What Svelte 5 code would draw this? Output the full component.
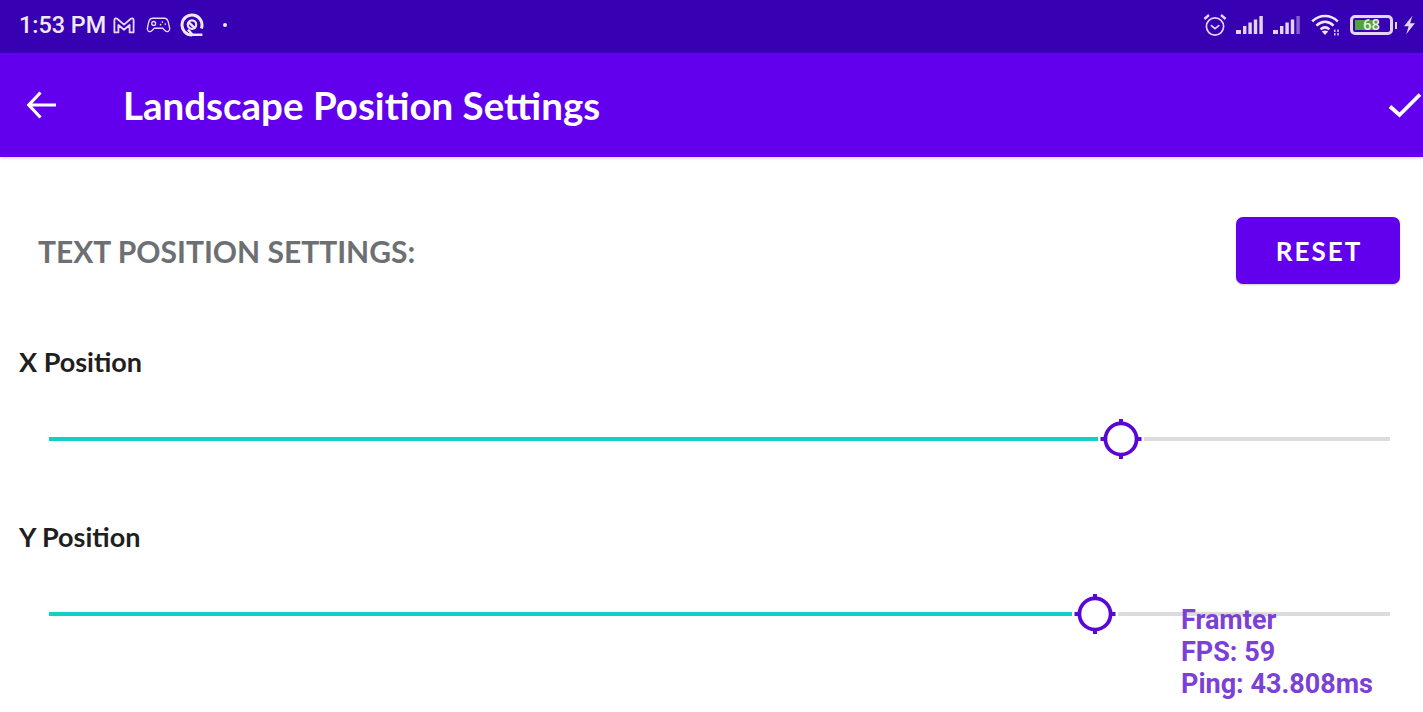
<script>
    const sliders = [
        { label: "X Position", value: 1121 - 49 },
        { label: "Y Position", value: 1095 - 49 }
    ];
    const trackWidth = 1341;
</script>

<div class="screen">
    <div class="statusbar">
        <div class="status-left">
            <span class="time">1:53 PM</span>
            <svg class="ic-gmail" width="22" height="17" viewBox="0 0 22 17" fill="none" stroke="#e6d8fb" stroke-width="1.8">
                <path d="M1.4 15.4V3C1.4 1.4 3 0.8 4.2 1.8L11 7.6L17.8 1.8C19 0.8 20.6 1.4 20.6 3V15.4H16.6V8L11 12.8L5.4 8V15.4Z" stroke-linejoin="round"/>
            </svg>
            <svg class="ic-pad" width="25" height="18" viewBox="0 0 26 18" fill="none" stroke="#e6d8fb" stroke-width="1.4">
                <path d="M7 2H19C21.5 2 22.6 3.6 23.2 6L24.6 12.5C25 15.5 22 17 20 15L17.4 12.4H8.6L6 15C4 17 1 15.5 1.4 12.5L2.8 6C3.4 3.6 4.5 2 7 2Z" stroke-linejoin="round"/>
                <circle cx="8" cy="7.4" r="2"/>
                <circle cx="17" cy="6" r="0.9" fill="#e6d8fb" stroke="none"/>
                <circle cx="20" cy="8" r="0.9" fill="#e6d8fb" stroke="none"/>
                <circle cx="15.2" cy="8.6" r="0.9" fill="#e6d8fb" stroke="none"/>
            </svg>
            <svg class="ic-q" width="24" height="24" viewBox="0 0 24 24" fill="none" stroke="#efe6fd" stroke-width="3">
                <path d="M12 22A10 10 0 1 1 21.4 15.4"/>
                <circle cx="12" cy="11.6" r="4.2" stroke-width="2.2"/>
                <path d="M8.8 9.4L15.4 15.6" stroke-width="2.4"/>
                <path d="M8 16.6L12.6 21.8H22.4" stroke-width="2.4"/>
            </svg>
            <span class="dot"></span>
        </div>
        <div class="status-right">
            <svg class="alarm" width="24" height="24" viewBox="0 0 24 24" fill="none" stroke="#e4d4fa" stroke-width="1.7">
                <circle cx="12" cy="13.5" r="8.6"/>
                <path d="M8.4 12.6L12 15.6L15.8 12.6" stroke-linecap="round"/>
                <path d="M1.4 6L6 2M22.6 6L18 2" stroke-width="2.4"/>
            </svg>
            {#each [0.999, 0.45] as lastBar}
                <svg class="signal" width="29" height="20" viewBox="0 0 29 20" fill="#e4d4fa">
                    <rect x="1" y="15" width="5" height="4"/>
                    <rect x="8" y="11" width="3.4" height="8"/>
                    <rect x="13.4" y="7.5" width="3.4" height="11.5"/>
                    <rect x="18.8" y="4.5" width="3.4" height="14.5"/>
                    <rect x="24.4" y="1" width="3.4" height="18" opacity={lastBar}/>
                </svg>
            {/each}
            <svg class="wifi" width="30" height="24" viewBox="0 0 30 24" fill="none" stroke="#efe6fd" stroke-width="2.5">
                <path d="M1.2 8.4C8.6 1.2 19.4 1.2 26.8 8.4"/>
                <path d="M5.4 12.6C10.8 7.6 17.2 7.6 22.6 12.6"/>
                <path d="M9.6 16.4C12.6 13.6 15.4 13.6 18.4 16.4"/>
                <path d="M14 22L10.8 18.6C12.8 17.2 15.2 17.2 17.2 18.6Z" fill="#efe6fd" stroke="none"/>
                <path d="M23.8 16.5V23M27 16.5V23" stroke-width="1.3" stroke-dasharray="2.6 0.8"/>
            </svg>
            <div class="battery">
                <div class="battery-body">
                    <span class="battery-fill"></span>
                    <span class="battery-text">68</span>
                </div>
                <span class="battery-cap"></span>
            </div>
            <svg class="bolt" width="13" height="20" viewBox="0 0 12 18" fill="#e4d4fa">
                <path d="M8.6 0.5L1 10.2H5.2L3 17.5L11 7.4H6.6Z"/>
            </svg>
        </div>
    </div>

    <header class="appbar">
        <svg class="back" width="34" height="34" viewBox="0 0 34 34" fill="none" stroke="#fff" stroke-width="3.2">
            <path d="M31 17H4M15.5 4.5L3.8 17L15.5 29.5"/>
        </svg>
        <h1>Landscape Position Settings</h1>
        <svg class="check" width="34" height="26" viewBox="0 0 34 26" fill="none" stroke="#fff" stroke-width="3.8">
            <path d="M2 14.5L11.5 23L32 2.5"/>
        </svg>
    </header>

    <section class="section-head">
        <h2>TEXT POSITION SETTINGS:</h2>
        <button class="reset">RESET</button>
    </section>

    {#each sliders as s}
        <div class="setting">
            <div class="setting-label">{s.label}</div>
            <div class="slider">
                <div class="track">
                    <div class="fill" style="width: {s.value / trackWidth * 100}%"></div>
                    <svg class="thumb" style="left: {s.value / trackWidth * 100}%" width="46" height="42" viewBox="0 0 46 42" fill="#fff" stroke="#5a07d6">
                        <rect x="0" y="18" width="46" height="6" fill="#fff" stroke="none"/>
                        <path d="M23 1V7M23 35V41M2.5 21H8M38 21H43.5" stroke-width="4"/>
                        <circle cx="23" cy="21" r="15.6" stroke-width="3.8"/>
                    </svg>
                </div>
            </div>
        </div>
    {/each}

    <div class="overlay">
        <div>Framter</div>
        <div>FPS: 59</div>
        <div>Ping: 43.808ms</div>
    </div>
</div>

<style>
    :global(body) {
        margin: 0;
        background: #fff;
    }
    .screen {
        position: relative;
        width: 1423px;
        height: 712px;
        overflow: hidden;
        font-family: Lato, sans-serif;
    }
    .statusbar {
        height: 53px;
        background: #3700b3;
        display: flex;
        align-items: center;
        justify-content: space-between;
        box-sizing: border-box;
        padding: 0 7px 3px 19px;
    }
    .status-left, .status-right {
        display: flex;
        align-items: center;
    }
    .time {
        font: 500 23.4px Roboto, sans-serif;
        color: #f0e8fd;
        margin-right: 7px;
    }
    .ic-pad {
        margin-left: 11px;
    }
    .ic-q {
        margin-left: 9px;
    }
    .dot {
        width: 4px;
        height: 4px;
        border-radius: 50%;
        background: #f0e8fd;
        margin-left: 19px;
    }
    .signal {
        margin-left: 8px;
    }
    .wifi {
        margin-left: 10px;
    }
    .battery {
        display: flex;
        align-items: center;
        margin-left: 9px;
    }
    .battery-body {
        position: relative;
        width: 37px;
        height: 14px;
        border: 3px solid #e4d4fa;
        border-radius: 5px;
        display: flex;
        align-items: center;
        justify-content: center;
    }
    .battery-fill {
        position: absolute;
        left: 2px;
        top: 2px;
        bottom: 2px;
        width: 22px;
        background: #4fa53c;
    }
    .battery-text {
        position: relative;
        font: 500 15px Roboto, sans-serif;
        color: #e6f3d9;
        line-height: 14px;
    }
    .battery-cap {
        width: 2px;
        height: 7px;
        margin-left: 2px;
        background: #e4d4fa;
    }
    .bolt {
        margin-left: 6px;
    }
    .appbar {
        height: 104px;
        background: #6200ee;
        display: flex;
        align-items: center;
        box-shadow: 0 1px 3px rgba(98, 0, 238, 0.25);
        padding-left: 25px;
        box-sizing: border-box;
    }
    .back {
        width: 34px;
        height: 34px;
    }
    h1 {
        flex: 1;
        margin: 0 0 0 64px;
        font-size: 38.5px;
        font-weight: 700;
        color: #fff;
    }
    .check {
        margin-right: 1px;
        margin-bottom: 0;
    }
    .section-head {
        display: flex;
        align-items: center;
        justify-content: space-between;
        padding: 60px 23px 0 38px;
    }
    h2 {
        margin: 0;
        font-size: 30px;
        font-weight: 700;
        color: #6c7073;
    }
    .reset {
        width: 164px;
        height: 67px;
        border: none;
        border-radius: 7px;
        padding: 0 0 0 2px;
        background: #6200ee;
        color: #fff;
        font-family: Lato, sans-serif;
        font-size: 26px;
        font-weight: 700;
        letter-spacing: 2px;
        box-shadow: 0 1px 2px rgba(0, 0, 0, 0.2);
    }
    .setting {
        padding: 0 33px 0 19px;
        height: 175px;
    }
    .setting-label {
        font-size: 27px;
        font-weight: 700;
        color: #1f1f1f;
        padding-top: 61px;
        line-height: 34px;
        height: 34px;
    }
    .slider {
        padding: 0 0 0 30px;
        margin-top: 58px;
    }
    .track {
        position: relative;
        height: 4px;
        background: #dcdcdc;
    }
    .fill {
        height: 4px;
        background: #16cfc3;
    }
    .thumb {
        position: absolute;
        top: -19px;
        transform: translateX(-23px);
    }
    .overlay {
        position: absolute;
        left: 1181px;
        top: 604px;
        font: 700 27px/32px Roboto, sans-serif;
        color: #7b41d6;
    }
</style>
